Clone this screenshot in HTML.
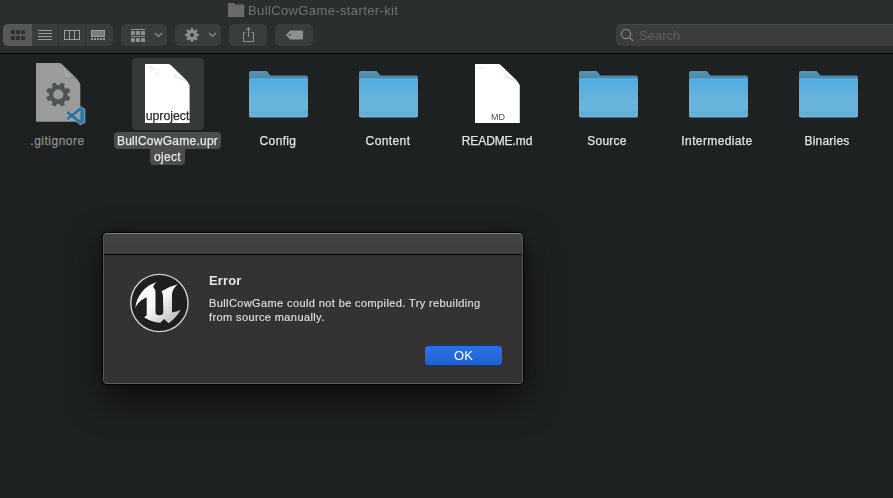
<!DOCTYPE html>
<html><head><meta charset="utf-8">
<style>
*{margin:0;padding:0;box-sizing:border-box}
html,body{width:893px;height:498px;overflow:hidden;-webkit-font-smoothing:antialiased;background:#1e2122;font-family:"Liberation Sans",sans-serif}
.abs{position:absolute;will-change:transform}
#tb{position:absolute;left:0;top:0;width:893px;height:53px;background:#2b2e2f}
#tbline{position:absolute;left:0;top:53px;width:893px;height:1px;background:#050505}
.btn{position:absolute;top:24px;height:22px;background:#3a3d3e;border-radius:5px}
.seg{position:absolute;top:0;height:22px}
.lbl{position:absolute;top:133px;height:16px;line-height:16px;font-size:12px;color:#e2e2e2;-webkit-text-stroke:0.25px currentColor;white-space:nowrap;text-align:center}
</style></head><body>
<div id="tb">
  <!-- title -->
  <svg class="abs" style="left:227.9px;top:2.9px" width="17" height="15" viewBox="0 0 17 15">
    <path d="M0 0.4 Q0 0 0.4 0 L6 0 L7.3 1.5 L15.8 1.5 Q16.2 1.5 16.2 1.9 L16.2 14 L0 14 Z" fill="#6a6b6c"/>
    <rect x="0" y="1.7" width="16.2" height="0.6" fill="#5c5d5e"/>
  </svg>
  <div class="abs" style="left:248.3px;top:1.8px;font-size:13px;line-height:18px;color:#707273;white-space:nowrap;letter-spacing:0.38px">BullCowGame-starter-kit</div>

  <!-- view segmented -->
  <div class="btn" style="left:3px;width:110px;overflow:hidden">
    <div class="seg" style="left:0;width:29px;background:#56585a"></div>
    <div class="seg" style="left:55px;width:1px;background:#2f3133"></div>
    <div class="seg" style="left:82px;width:1px;background:#2f3133"></div>
  </div>
  <svg class="abs" style="left:0;top:0" width="320" height="53" viewBox="0 0 320 53">
    <!-- icon grid -->
    <g fill="#2e3032">
      <rect x="11" y="30" width="4" height="4" rx="0.6"/><rect x="16" y="30" width="4" height="4" rx="0.6"/><rect x="21" y="30" width="4" height="4" rx="0.6"/>
      <rect x="11" y="36" width="4" height="4" rx="0.6"/><rect x="16" y="36" width="4" height="4" rx="0.6"/><rect x="21" y="36" width="4" height="4" rx="0.6"/>
    </g>
    <!-- list -->
    <g fill="#9c9d9e">
      <rect x="38" y="30" width="14" height="1"/><rect x="38" y="33" width="14" height="1"/>
      <rect x="38" y="36" width="14" height="1"/><rect x="38" y="39" width="14" height="1"/>
    </g>
    <!-- columns -->
    <g fill="none" stroke="#9c9d9e" stroke-width="1">
      <rect x="64.5" y="30.5" width="15" height="9"/>
      <line x1="69.5" y1="30.5" x2="69.5" y2="39.5"/><line x1="74.5" y1="30.5" x2="74.5" y2="39.5"/>
    </g>
    <!-- gallery -->
    <rect x="91.5" y="30.5" width="13" height="6" fill="#7a7b7c" stroke="#9c9d9e" stroke-width="1"/>
    <g fill="#9c9d9e">
      <rect x="91" y="38" width="2" height="2"/><rect x="94" y="38" width="2" height="2"/><rect x="97" y="38" width="2" height="2"/><rect x="100" y="38" width="2" height="2"/><rect x="103" y="38" width="2" height="2"/>
    </g>
  </svg>

  <!-- arrange -->
  <div class="btn" style="left:121px;width:46px"></div>
  <!-- action -->
  <div class="btn" style="left:175px;width:46px"></div>
  <!-- share -->
  <div class="btn" style="left:229px;width:38px"></div>
  <!-- tag -->
  <div class="btn" style="left:275px;width:38px"></div>

  <svg class="abs" style="left:0;top:0" width="320" height="53" viewBox="0 0 320 53">
    <!-- arrange icon -->
    <g fill="#8e8f90">
      <rect x="131" y="29" width="14" height="1"/>
      <rect x="131" y="31" width="4" height="4" rx="0.6"/><rect x="136" y="31" width="4" height="4" rx="0.6"/><rect x="141" y="31" width="4" height="4" rx="0.6"/>
      <rect x="131" y="36" width="14" height="1"/>
      <rect x="131" y="38" width="4" height="4" rx="0.6"/><rect x="136" y="38" width="4" height="4" rx="0.6"/><rect x="141" y="38" width="4" height="4" rx="0.6"/>
    </g>
    <path d="M155 33 L158.5 36.5 L162 33" fill="none" stroke="#8e8f90" stroke-width="1.2"/>
    <!-- gear -->
    <g fill="#8e8f90" transform="translate(192 35)">
      <circle r="5.2"/>
      <g>
        <rect x="-1.2" y="-7" width="2.4" height="14"/>
        <rect x="-7" y="-1.2" width="14" height="2.4"/>
        <rect x="-1.2" y="-7" width="2.4" height="14" transform="rotate(45)"/>
        <rect x="-1.2" y="-7" width="2.4" height="14" transform="rotate(-45)"/>
      </g>
      <circle r="2" fill="#3a3d3e"/>
    </g>
    <path d="M209 33 L212.5 36.5 L216 33" fill="none" stroke="#8e8f90" stroke-width="1.2"/>
    <!-- share -->
    <g fill="none" stroke="#8e8f90" stroke-width="1">
      <path d="M245.5 32.5 L243.5 32.5 L243.5 41.5 L253.5 41.5 L253.5 32.5 L251.5 32.5"/>
      <path d="M248.5 27.5 L248.5 37"/>
      <path d="M245.8 30.2 L248.5 27.5 L251.2 30.2"/>
    </g>
    <!-- tag -->
    <path d="M286 35 L290 30.5 L302 30.5 Q303 30.5 303 31.5 L303 38.5 Q303 39.5 302 39.5 L290 39.5 Z" fill="#8e8f90"/>
    <rect x="289.2" y="34.2" width="1.6" height="1.6" fill="#3a3c3e"/>
  </svg>

  <!-- search -->
  <div class="abs" style="left:616px;top:24px;width:290px;height:22px;background:#3b3d3f;border-radius:5px;border-top:1px solid #46484a"></div>
  <svg class="abs" style="left:616px;top:24px" width="30" height="22" viewBox="0 0 30 22">
    <circle cx="10" cy="10" r="4.6" fill="none" stroke="#858687" stroke-width="1.15"/>
    <path d="M13.3 13.3 L17 17" stroke="#858687" stroke-width="1.25"/>
  </svg>
  <div class="abs" style="left:639px;top:26.5px;font-size:13px;line-height:18px;color:#5c5e60">Search</div>
</div>
<div id="tbline"></div>

<!-- ICONS -->
<!-- gitignore -->
<svg width="0" height="0" style="position:absolute">
  <defs>
    <linearGradient id="curl" x1="0" y1="0" x2="1" y2="1">
      <stop offset="0" stop-color="#000" stop-opacity="0.18"/>
      <stop offset="0.5" stop-color="#000" stop-opacity="0.02"/>
      <stop offset="1" stop-color="#000" stop-opacity="0.12"/>
    </linearGradient>
  </defs>
</svg>
<svg class="abs" style="left:35.5px;top:63.3px" width="46" height="60" viewBox="0 0 46 60">
  <path d="M0 0 L22.5 0 Q24.8 0 26.3 1.4 L38.6 13.6 Q44.3 19 44.3 22.5 L44.3 58.8 L0 58.8 Z" fill="#9b9b9b"/>
  <path d="M27.8 4 L29.6 13.4 L38.2 14.2 Q33 13 31.2 11.5 Q29 9 27.8 4 Z" fill="#b4b4b4"/>
  <path d="M29.6 13.4 L38.2 14.2 Q41 16.5 42 18 Q37 15.5 29.6 13.4 Z" fill="#8c8c8c" opacity="0.6"/>
  <g transform="translate(22.3 31.5)" fill="#4e5356">
    <circle r="9.4"/>
    <g transform="rotate(22.5)">
      <rect x="-2.2" y="-12.2" width="4.4" height="24.4" rx="0.7"/>
      <rect x="-2.2" y="-12.2" width="4.4" height="24.4" rx="0.7" transform="rotate(45)"/>
      <rect x="-2.2" y="-12.2" width="4.4" height="24.4" rx="0.7" transform="rotate(90)"/>
      <rect x="-2.2" y="-12.2" width="4.4" height="24.4" rx="0.7" transform="rotate(135)"/>
    </g>
    <circle r="5.1" fill="#9b9b9b"/>
  </g>
</svg>
<svg class="abs" style="left:60px;top:100px" width="30" height="30" viewBox="60 100 30 30">
  <g stroke="#a9a9a9" stroke-width="4.2" stroke-linecap="round" stroke-linejoin="round" fill="none">
    <path d="M80.6 108.6 L68 118.5"/><path d="M68 112.6 L80.6 122.6"/>
  </g>
  <path d="M79.8 106.2 L85.3 109 L85.3 122.4 L79.8 125.2 Z" fill="#a9a9a9"/>
  <g stroke="#2872aa" stroke-width="2.8" stroke-linecap="round" fill="none">
    <path d="M80.6 108.6 L68 118.5"/><path d="M68 112.6 L80.6 122.6"/>
  </g>
  <path d="M80.3 107.3 L84.4 109.5 L84.4 121.9 L80.3 124.1 Z" fill="#2a79b3"/>
</svg>
<div class="lbl" style="left:7.5px;width:100px;color:#8d8e8f;letter-spacing:0.5px">.gitignore</div>

<!-- uproject -->
<div class="abs" style="left:132px;top:58px;width:72px;height:72px;background:#36393a;border-radius:4px"></div>
<svg class="abs" style="left:145px;top:64px" width="46" height="60" viewBox="0 0 46 60">
  <path d="M0 0 L22.5 0 Q24.8 0 26.3 1.4 L38.6 13.6 Q44.6 19 44.6 22.5 L44.6 59 L0 59 Z" fill="#ffffff"/>
  <path d="M27.8 4 L29.6 13.4 L38.2 14.2 Q33 13 31.2 11.5 Q29 9 27.8 4 Z" fill="#ececec"/>
  <path d="M29.6 13.4 L38.2 14.2 Q41 16.5 42 18 Q37 15.5 29.6 13.4 Z" fill="#d9d9d9" opacity="0.7"/>
  <g fill="#e4e4e4"><rect x="4" y="3.5" width="6" height="0.6"/><rect x="4" y="5.3" width="8" height="0.6"/><rect x="4" y="7" width="3" height="0.6"/><rect x="10.5" y="8.6" width="5" height="0.6"/><rect x="10" y="10.2" width="4" height="0.6"/></g>
</svg>
<div class="abs" style="left:145px;top:108px;width:45px;text-align:center;font-size:12.3px;line-height:16px;color:#2a2a2a;white-space:nowrap;-webkit-text-stroke:0.25px currentColor">uproject</div>
<div class="abs" style="left:114px;top:132px;width:107px;height:17px;background:#4b4d4f;border-radius:4px"></div>
<div class="abs" style="left:150px;top:148px;width:35px;height:17px;background:#4b4d4f;border-radius:0 0 4px 4px"></div>
<div class="lbl" style="left:114px;top:133px;width:107px;color:#e8e8e8;letter-spacing:0.25px">BullCowGame.upr</div>
<div class="lbl" style="left:150px;top:148.5px;width:35px;color:#e8e8e8;letter-spacing:0.3px">oject</div>

<!-- folders -->
<svg width="0" height="0" style="position:absolute">
  <defs>
    <linearGradient id="fg" x1="0" y1="0" x2="0" y2="1">
      <stop offset="0" stop-color="#50ace0"/>
      <stop offset="0.55" stop-color="#68b4dc"/>
      <stop offset="1" stop-color="#6db6dc"/>
    </linearGradient>
    <linearGradient id="tg" x1="0" y1="0" x2="0" y2="1">
      <stop offset="0" stop-color="#5794b6"/>
      <stop offset="1" stop-color="#4884a4"/>
    </linearGradient>
    <symbol id="folder" viewBox="0 0 59 47">
      <path d="M0 2 Q0 0 2 0 L16.8 0 Q17.8 0 18.5 0.8 L21.3 4.4 L57 4.4 Q59 4.4 59 6.4 L59 10 L0 10 Z" fill="url(#tg)"/>
      <rect x="0" y="7.5" width="59" height="39.1" rx="1.8" fill="url(#fg)"/>
      <rect x="1" y="7.6" width="57" height="0.8" fill="#7ac6ee" opacity="0.55"/>
      <rect x="0" y="38.5" width="59" height="3.5" fill="#5ea6cc" opacity="0.25"/>
      <rect x="0" y="41.4" width="59" height="0.9" fill="#5a9fc6" opacity="0.6"/>
      <rect x="0" y="43.6" width="59" height="0.9" fill="#5a9fc6" opacity="0.5"/>
    </symbol>
  </defs>
</svg>
<svg class="abs" style="left:249px;top:70.6px" width="59" height="47"><use href="#folder"/></svg>
<svg class="abs" style="left:359px;top:70.6px" width="59" height="47"><use href="#folder"/></svg>
<svg class="abs" style="left:579px;top:70.6px" width="59" height="47"><use href="#folder"/></svg>
<svg class="abs" style="left:689px;top:70.6px" width="59" height="47"><use href="#folder"/></svg>
<svg class="abs" style="left:799px;top:70.6px" width="59" height="47"><use href="#folder"/></svg>

<!-- readme -->
<svg class="abs" style="left:474.8px;top:63.8px" width="46" height="60" viewBox="0 0 46 60">
  <path d="M0 0 L22.5 0 Q24.8 0 26.3 1.4 L38.6 13.6 Q44.8 19 44.8 22.5 L44.8 59 L0 59 Z" fill="#ffffff"/>
  <path d="M27.8 4 L29.6 13.4 L38.2 14.2 Q33 13 31.2 11.5 Q29 9 27.8 4 Z" fill="#ececec"/>
  <path d="M29.6 13.4 L38.2 14.2 Q41 16.5 42 18 Q37 15.5 29.6 13.4 Z" fill="#d9d9d9" opacity="0.7"/>
  <rect x="3.5" y="3.5" width="5" height="0.7" fill="#d0d0d0"/>
</svg>
<div class="abs" style="left:470px;top:111.8px;width:56px;text-align:center;font-size:9px;line-height:10px;color:#505050">MD</div>

<div class="lbl" style="left:228px;width:100px;letter-spacing:0.35px">Config</div>
<div class="lbl" style="left:338px;width:100px;letter-spacing:0.4px">Content</div>
<div class="lbl" style="left:447px;width:100px;letter-spacing:-0.1px">README.md</div>
<div class="lbl" style="left:557px;width:100px;letter-spacing:0.25px">Source</div>
<div class="lbl" style="left:667px;width:100px;letter-spacing:0.38px">Intermediate</div>
<div class="lbl" style="left:777px;width:100px;letter-spacing:0.2px">Binaries</div>

<!-- DIALOG -->
<div class="abs" style="left:102px;top:232px;width:422px;height:153px;border:1px solid #050505;border-radius:5px;box-shadow:0 14px 34px rgba(0,0,0,0.6), 0 0 10px rgba(0,0,0,0.35);background:#333333;overflow:hidden">
  <div class="abs" style="left:1px;top:1px;width:418px;height:20px;background:linear-gradient(#434343,#3d3d3d)"></div>
  <div class="abs" style="left:0;top:21px;width:420px;height:1px;background:#000"></div>
  <div class="abs" style="left:0;top:0;width:420px;height:151px;border:1px solid #575757;border-top-color:#858585;border-bottom-color:#5e5e5e;border-radius:4px"></div>
</div>
<svg class="abs" style="left:125px;top:268px" width="70" height="70" viewBox="125 268 70 70">
  <defs>
    <linearGradient id="ug" x1="0" y1="0" x2="1" y2="1">
      <stop offset="0" stop-color="#ffffff"/>
      <stop offset="0.5" stop-color="#f6f6f6"/>
      <stop offset="1" stop-color="#b0b0b0"/>
    </linearGradient>
  </defs>
  <circle cx="159.4" cy="303" r="28.6" fill="#1f1f1f" stroke="#d0d0d0" stroke-width="1.4"/>
  <path fill="url(#ug)" d="M135.3 308 C136.5 296 145 285.5 156.8 282 Q153 285 153.4 287.5 Q155.5 289.5 155.5 292 L155.5 312 Q155.5 315.3 159.4 315.3 Q163.3 315.3 163.3 312 L163 296 Q162.8 293 161.5 291.2 Q169 286.5 177.9 284.3 Q173 288 172 294 L172 312.5 Q176.5 312 180.8 309.8 Q176 318 168.7 323.3 L164 319 L160.3 322.7 Q153 323 144 317.3 L146.7 315.5 L146.7 297.4 C142.5 298.8 137.8 302 135.3 308 Z"/>
</svg>
<div class="abs" style="left:209px;top:273px;font-size:13px;line-height:16px;font-weight:bold;color:#e6e6e6;letter-spacing:0.15px">Error</div>
<div class="abs" style="left:209px;top:296px;font-size:11px;line-height:14px;color:#dedede;letter-spacing:0.39px;white-space:nowrap;-webkit-text-stroke:0.2px currentColor">BullCowGame could not be compiled. Try rebuilding<br>from source manually.</div>
<div class="abs" style="left:425px;top:346px;width:77px;height:19px;border-radius:3.5px;background:linear-gradient(#2b72e6,#1f62d6);color:#fff;font-size:13px;line-height:19px;text-align:center">OK</div>
</body></html>
